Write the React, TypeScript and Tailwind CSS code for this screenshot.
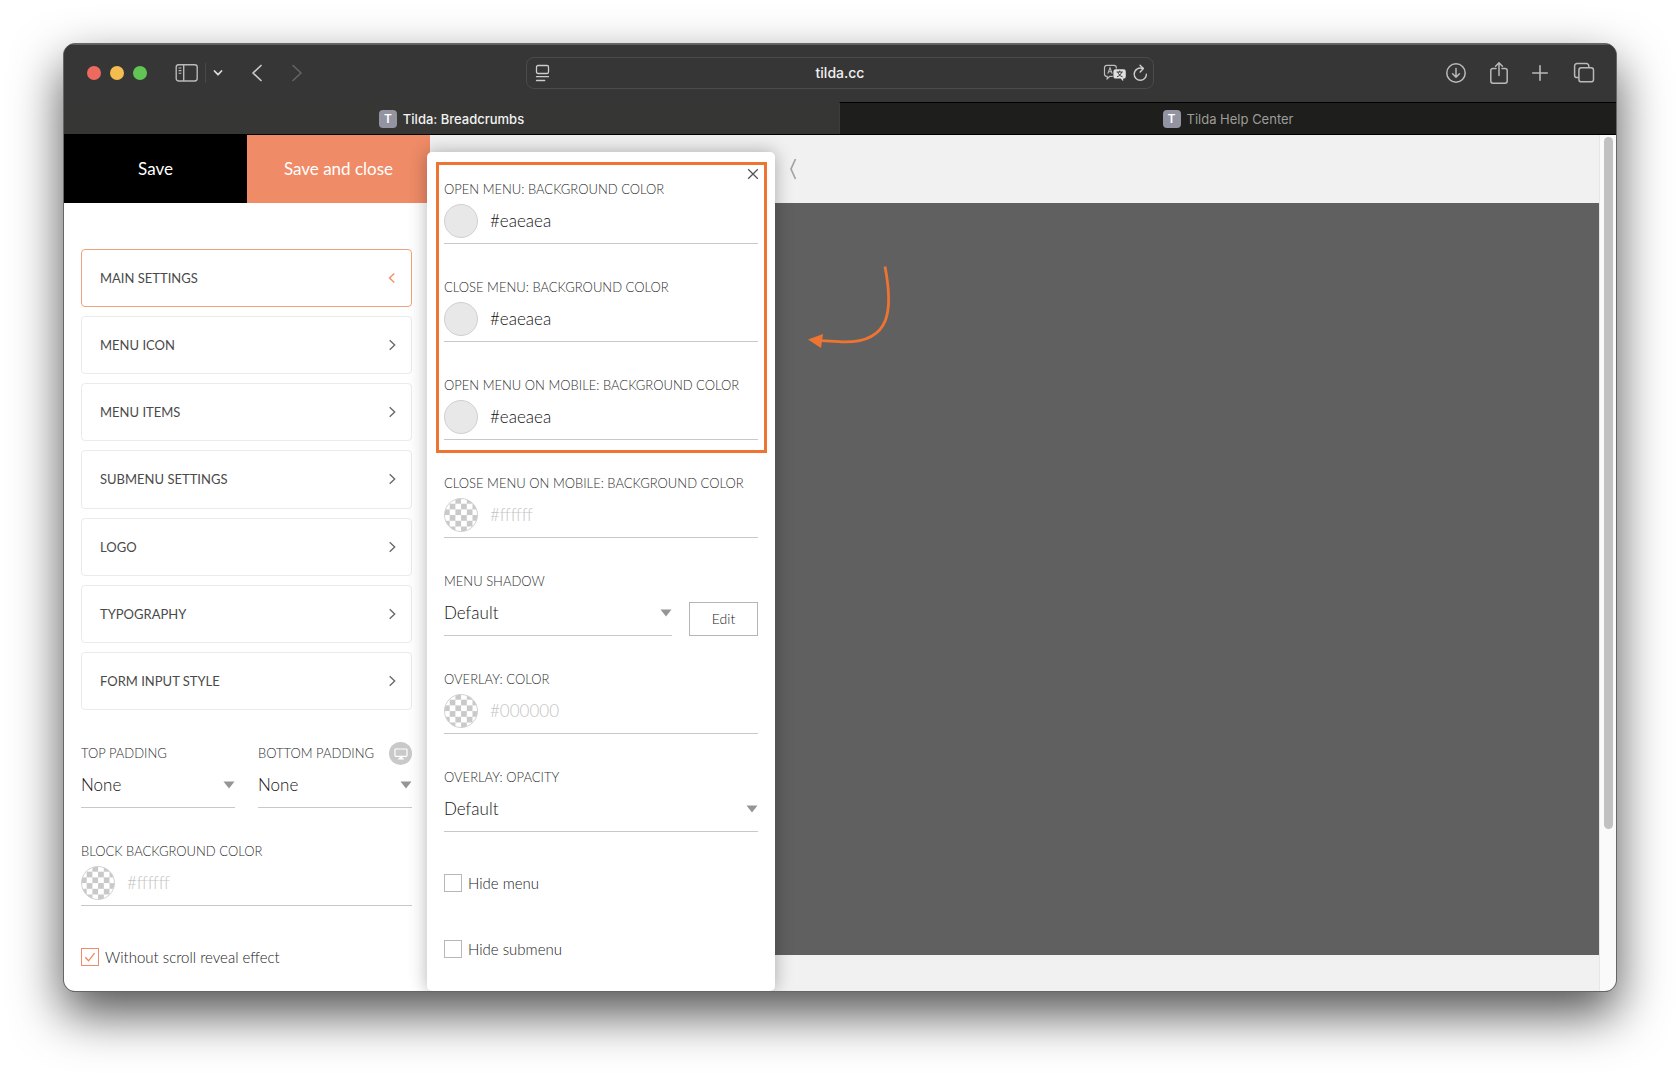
import React, { useId, useState } from "react";

const menuSections = [
  "MAIN SETTINGS",
  "MENU ICON",
  "MENU ITEMS",
  "SUBMENU SETTINGS",
  "LOGO",
  "TYPOGRAPHY",
  "FORM INPUT STYLE",
];

const labelClass = "block h-5 text-[13px] leading-5 whitespace-nowrap text-[#2e2e2e]";

function Checker() {
  return (
    <svg viewBox="0 0 34 34" className="size-[34px] shrink-0" aria-hidden="true">
      <defs>
        <pattern id="checker" x="0" y="0" width="11.4" height="11.4" patternUnits="userSpaceOnUse">
          <rect width="11.4" height="11.4" fill="#fff" />
          <rect width="5.7" height="5.7" x="0" y="0" fill="#c9c9c9" />
          <rect width="5.7" height="5.7" x="5.7" y="5.7" fill="#c9c9c9" />
        </pattern>
      </defs>
      <circle cx="17" cy="17" r="16.5" fill="url(#checker)" stroke="#d2d2d2" />
    </svg>
  );
}

function ColorField({ label, value, placeholder }: { label: string; value?: string; placeholder?: string }) {
  const id = useId();
  const [text, setText] = useState(value ?? "");
  return (
    <div>
      <label htmlFor={id} className={labelClass}>{label}</label>
      <div className="flex h-[45px] items-center gap-3 border-b border-[#c8c8c8]">
        {value ? (
          <span className="size-[34px] shrink-0 rounded-full border border-[#d0d0d0] bg-[#e8e8e8]" />
        ) : (
          <Checker />
        )}
        <input
          id={id}
          value={text}
          placeholder={placeholder}
          onChange={(e) => setText(e.target.value)}
          className="w-full min-w-0 bg-transparent text-[17px] leading-6 text-[#111] outline-none placeholder:text-[#c4c4c4]"
        />
      </div>
    </div>
  );
}

function SelectField({ label, option, children }: { label: string; option: string; children?: React.ReactNode }) {
  const id = useId();
  return (
    <div>
      <label htmlFor={id} className={labelClass}>{label}</label>
      <div className="flex items-end gap-[17px]">
        <div className="relative h-[45px] flex-1 border-b border-[#c8c8c8]">
          <select
            id={id}
            className="h-[44px] w-full appearance-none bg-transparent text-[17px] leading-6 text-[#111] outline-none"
          >
            <option>{option}</option>
          </select>
          <svg viewBox="0 0 12 8" className="pointer-events-none absolute top-[18px] right-0 h-2 w-3" aria-hidden="true">
            <path d="M0.5 0.5H11.5L6 7.5Z" fill="#959595" />
          </svg>
        </div>
        {children}
      </div>
    </div>
  );
}

function CheckField({ label, checked = false }: { label: string; checked?: boolean }) {
  const [on, setOn] = useState(checked);
  return (
    <label className="flex h-[18px] items-center gap-[6px] text-[15px] leading-[18px] text-[#222]">
      <span className="relative size-[18px] shrink-0">
        <input
          type="checkbox"
          checked={on}
          onChange={() => setOn(!on)}
          className="block size-[18px] appearance-none border border-[#b8b8b8] bg-white checked:border-[#ef8b6a]"
        />
        {on && (
          <svg viewBox="0 0 18 18" className="pointer-events-none absolute inset-0 size-[18px]" fill="none" stroke="#ee855f" strokeWidth="1.3" aria-hidden="true">
            <path d="M4.3 9.2 7.6 12.8 13.6 5.2" />
          </svg>
        )}
      </span>
      {label}
    </label>
  );
}

function Favicon() {
  return (
    <span className="flex size-[18px] items-center justify-center rounded bg-[#9394a1] text-[12px] leading-none font-semibold text-white">T</span>
  );
}

function Toolbar() {
  return (
    <div className="grid h-[58px] grid-cols-[1fr_628px_1fr] items-center border-t border-[#5e5e5e] bg-[#363636] pb-[2px] text-[#b9b9b9]">
      <div className="flex items-center pl-[23px]">
        <div className="flex gap-[9px]">
          <button aria-label="Close window" className="size-[14px] rounded-full bg-[#ee6a5f]" />
          <button aria-label="Minimize window" className="size-[14px] rounded-full bg-[#f5bd4f]" />
          <button aria-label="Zoom window" className="size-[14px] rounded-full bg-[#61c454]" />
        </div>
        <button aria-label="Sidebar" className="ml-[28px]">
          <svg viewBox="0 0 24 20" className="h-5 w-6" fill="none" stroke="currentColor" strokeWidth="1.4">
            <rect x="1.2" y="1.7" width="21" height="16.3" rx="2.4" />
            <path d="M8.7 1.7V18" />
            <path d="M3.6 5H6.4M3.6 7.6H6.4M3.6 10.2H6.4" strokeWidth="1.1" />
          </svg>
        </button>
        <span className="ml-[6px] h-5 w-px bg-[#484848]" />
        <button aria-label="Tab groups" className="ml-[7px]">
          <svg viewBox="0 0 10 8" className="h-2 w-[10px]" fill="none" stroke="#d8d8d8" strokeWidth="1.8" strokeLinecap="round" strokeLinejoin="round">
            <path d="M1.5 2 5 5.7 8.5 2" />
          </svg>
        </button>
        <button aria-label="Back" className="ml-7">
          <svg viewBox="0 0 12 18" className="h-[18px] w-3" fill="none" stroke="#c8c8c8" strokeWidth="1.7" strokeLinecap="round" strokeLinejoin="round">
            <path d="M10 1.5 2 9 10 16.5" />
          </svg>
        </button>
        <button aria-label="Forward" className="ml-7">
          <svg viewBox="0 0 12 18" className="h-[18px] w-3" fill="none" stroke="#636363" strokeWidth="1.7" strokeLinecap="round" strokeLinejoin="round">
            <path d="M2 1.5 10 9 2 16.5" />
          </svg>
        </button>
      </div>
      <div className="flex h-8 items-center justify-between rounded-lg border border-[#4b4b4b] pr-[5px] pl-2">
        <button aria-label="Reader" className="w-[42px]">
          <svg viewBox="0 0 16 18" className="h-[18px] w-4" fill="none" stroke="#cccccc" strokeWidth="1.3" strokeLinecap="round">
            <rect x="1.5" y="1.5" width="12" height="8" rx="1.4" />
            <path d="M1.5 12.7H13.5M1.5 16.5H9.7" />
          </svg>
        </button>
        <input aria-label="Address" defaultValue="tilda.cc" className="w-40 bg-transparent text-center text-[14px] leading-5 font-medium text-[#f0f0f0] outline-none" />
        <div className="flex gap-[6px]">
          <button aria-label="Translate">
            <svg viewBox="0 0 24 18" className="h-[18px] w-6" fill="none">
              <path d="M9.8 12.3H6.8L4.2 14.8V12.3H3.8A2.3 2.3 0 0 1 1.5 10V3.6A2.3 2.3 0 0 1 3.8 1.3H11A2.3 2.3 0 0 1 13.3 3.6V4.6" stroke="#bdbdbd" strokeWidth="1.2" />
              <path d="M4.8 9.6 7 3.9 9.2 9.6M5.5 7.8H8.5" stroke="#bdbdbd" strokeWidth="1.1" />
              <path d="M12.6 5.2H20.6A2.2 2.2 0 0 1 22.8 7.4V12.4A2.2 2.2 0 0 1 20.6 14.6H20.2V17.2L17.6 14.6H12.6A2.2 2.2 0 0 1 10.4 12.4V7.4A2.2 2.2 0 0 1 12.6 5.2Z" fill="#e0e0e0" />
              <path d="M13.6 8H19.8M16.7 6.7V8M14 12.8C16.6 11.7 18 10.4 18.5 8M19.5 12.8C16.8 11.7 15.5 10.4 15 8" stroke="#3a3a3a" strokeWidth="1" />
            </svg>
          </button>
          <button aria-label="Reload">
            <svg viewBox="0 0 15 18" className="h-[18px] w-[15px]" fill="none" stroke="#cccccc" strokeWidth="1.4" strokeLinecap="round" strokeLinejoin="round">
              <path d="M10 4.5C5.5 2.9 1.2 5.8 1.2 10.2A6.1 6.1 0 0 0 13.4 10.2" />
              <path d="M7 1.2 10.4 4.6 7.2 8" />
            </svg>
          </button>
        </div>
      </div>
      <div className="flex items-center justify-end pr-[21px]">
        <button aria-label="Downloads">
          <svg viewBox="0 0 22 22" className="size-[22px]" fill="none" stroke="currentColor" strokeWidth="1.5" strokeLinecap="round" strokeLinejoin="round">
            <circle cx="11" cy="11" r="9.2" />
            <path d="M11 6.4V15M7.6 11.8 11 15.2 14.4 11.8" />
          </svg>
        </button>
        <button aria-label="Share" className="ml-[22px]">
          <svg viewBox="0 0 20 24" className="h-6 w-5" fill="none" stroke="currentColor" strokeWidth="1.5" strokeLinecap="round" strokeLinejoin="round">
            <path d="M7 7.4H4A2.2 2.2 0 0 0 1.8 9.6V20A2.2 2.2 0 0 0 4 22.2H16A2.2 2.2 0 0 0 18.2 20V9.6A2.2 2.2 0 0 0 16 7.4H13" />
            <path d="M10 14.6V2M6.6 5.2 10 1.8 13.4 5.2" />
          </svg>
        </button>
        <button aria-label="New tab" className="ml-[22px]">
          <svg viewBox="0 0 18 18" className="size-[18px]" fill="none" stroke="currentColor" strokeWidth="1.6" strokeLinecap="round">
            <path d="M9 1.7V16.3M1.7 9H16.3" />
          </svg>
        </button>
        <button aria-label="Tab overview" className="ml-[24px]">
          <svg viewBox="0 0 22 22" className="size-[22px]" fill="none" stroke="currentColor" strokeWidth="1.5">
            <path d="M5.9 15.6H4A2.4 2.4 0 0 1 1.6 13.2V4A2.4 2.4 0 0 1 4 1.6H13.4A2.4 2.4 0 0 1 15.8 4V5.8" />
            <rect x="5.9" y="5.8" width="14.6" height="14" rx="2.4" />
          </svg>
        </button>
      </div>
    </div>
  );
}

function TabBar() {
  return (
    <div className="grid h-[33px] grid-cols-[775fr_777fr] border-b border-black text-[13px] leading-4">
      <button className="flex items-center justify-center gap-[6px] border-t border-[#363636] bg-[#363634] font-medium text-[#f2f2f2]">
        <Favicon />
        Tilda: Breadcrumbs
      </button>
      <button className="flex items-center justify-center gap-[6px] border-t border-l border-t-black border-l-[#3c3c3a] bg-[#1e1e1c] text-[#9c9c9a]">
        <Favicon />
        Tilda Help Center
      </button>
    </div>
  );
}

function Sidebar() {
  return (
    <aside className="flex w-[366px] shrink-0 flex-col bg-white">
      <div className="grid h-[68px] shrink-0 grid-cols-2 text-[17px] leading-6 font-normal text-white">
        <button className="bg-black">Save</button>
        <button className="bg-[#ef8b67]">Save and close</button>
      </div>
      <div className="flex flex-col pt-[46px] pr-[18px] pl-[17px]">
        <nav className="grid h-[461px] auto-rows-fr gap-[9px]">
          {menuSections.map((name, i) => (
            <button
              key={name}
              className={
                i === 0
                  ? "flex items-center justify-between rounded border border-[#f0a27c] pr-[15px] pl-[18px] text-[13px] leading-4 font-normal text-[#4a4a4a]"
                  : "flex items-center justify-between rounded border border-[#ebebeb] pr-[15px] pl-[18px] text-[13px] leading-4 font-normal text-[#4a4a4a]"
              }
            >
              {name}
              <svg viewBox="0 0 8 12" className="h-3 w-2" fill="none" stroke={i === 0 ? "#ef9166" : "#6a6a6a"} strokeWidth="1.4" aria-hidden="true">
                <path d={i === 0 ? "M6.3 1.4 1.5 6 6.3 10.6" : "M1.7 1.2 6.7 6 1.7 10.8"} />
              </svg>
            </button>
          ))}
        </nav>
        <div className="relative mt-[33px] grid grid-cols-2 gap-[23px]">
          <SelectField label="TOP PADDING" option="None" />
          <SelectField label="BOTTOM PADDING" option="None" />
          <button aria-label="Screen size" className="absolute -top-px right-0 flex size-[23px] items-center justify-center rounded-full bg-[#c9c9c9]">
            <svg viewBox="0 0 14 12" className="h-3 w-[14px]" fill="none">
              <rect x="1" y="1" width="12" height="7.4" rx="0.8" stroke="#fff" strokeWidth="1.2" />
              <path d="M5.8 8.6H8.2L8.8 10.6H10V11.4H4V10.6H5.2Z" fill="#fff" />
            </svg>
          </button>
        </div>
        <div className="mt-[33px]">
          <ColorField label="BLOCK BACKGROUND COLOR" placeholder="#ffffff" />
        </div>
        <div className="mt-[42px]">
          <CheckField label="Without scroll reveal effect" checked />
        </div>
      </div>
    </aside>
  );
}

function SettingsPanel() {
  return (
    <section
      aria-label="Main settings"
      className="absolute top-[17px] bottom-0 left-[363px] w-[348px] rounded-[5px] bg-white px-[17px] pt-[27px] shadow-[0_0_18px_rgba(0,0,0,0.3)]"
    >
      <div className="flex flex-col gap-[33px]">
        <ColorField label="OPEN MENU: BACKGROUND COLOR" value="#eaeaea" />
        <ColorField label="CLOSE MENU: BACKGROUND COLOR" value="#eaeaea" />
        <ColorField label="OPEN MENU ON MOBILE: BACKGROUND COLOR" value="#eaeaea" />
        <ColorField label="CLOSE MENU ON MOBILE: BACKGROUND COLOR" placeholder="#ffffff" />
        <SelectField label="MENU SHADOW" option="Default">
          <button className="h-[34px] w-[69px] border border-[#b5b5b5] text-[14px] leading-4 text-[#222]">Edit</button>
        </SelectField>
        <ColorField label="OVERLAY: COLOR" placeholder="#000000" />
        <SelectField label="OVERLAY: OPACITY" option="Default" />
      </div>
      <div className="mt-[42px] flex flex-col gap-12">
        <CheckField label="Hide menu" />
        <CheckField label="Hide submenu" />
      </div>
      <div className="pointer-events-none absolute top-[10px] left-[9px] h-[291px] w-[331px] border-3 border-[#ee7431]" />
      <button aria-label="Close panel" className="absolute top-[16px] right-[16px]">
        <svg viewBox="0 0 12 12" className="size-3" fill="none" stroke="#555" strokeWidth="1.3">
          <path d="M1.2 1.2 10.8 10.8M10.8 1.2 1.2 10.8" />
        </svg>
      </button>
    </section>
  );
}

export default function App() {
  return (
    <div className="flex min-h-screen flex-col bg-white px-[63px] pt-[43px] pb-[84px] font-['Inter',sans-serif]">
      <div className="flex flex-1 flex-col overflow-hidden rounded-[12px] border border-[#666] bg-[#363636] shadow-[0_22px_50px_rgba(0,0,0,0.68)]">
        <Toolbar />
        <TabBar />
        <div className="relative flex flex-1 font-['Lato',sans-serif] font-light">
          <Sidebar />
          <main className="flex min-w-0 flex-1 flex-col bg-[#f1f1f1]">
            <div className="flex h-[68px] shrink-0 items-center pl-[359px]">
              <button aria-label="Collapse">
                <svg viewBox="0 0 8 22" className="h-[22px] w-2" fill="none" stroke="#a4a4a4" strokeWidth="1.7">
                  <path d="M6.5 1 2 11 6.5 21" />
                </svg>
              </button>
            </div>
            <div className="relative flex-1 bg-[#606060]">
              <svg viewBox="0 0 86 84" className="absolute top-[62px] left-[378px] h-[84px] w-[86px]" fill="none" aria-hidden="true">
                <path d="M77 1.5C84.5 41 86 80 31 76.6L13 75.6" stroke="#ee7431" strokeWidth="2.8" />
                <path d="M0 74.5 15 69 13 83Z" fill="#ee7431" />
              </svg>
            </div>
            <div className="h-9 shrink-0" />
          </main>
          <div className="w-[17px] shrink-0 border-l border-[#e6e6e6] bg-[#fafafa] pt-[2px] pl-1">
            <div className="h-[81%] w-[9px] rounded-full bg-[#c1c1c1]" />
          </div>
          <SettingsPanel />
        </div>
      </div>
    </div>
  );
}
